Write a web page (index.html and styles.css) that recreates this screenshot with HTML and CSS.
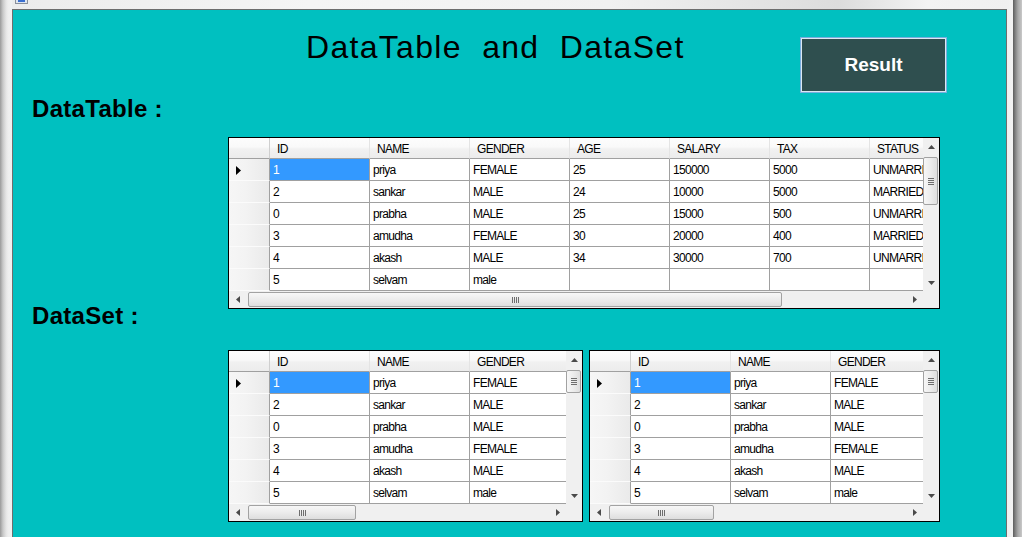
FILE: index.html
```html
<!DOCTYPE html>
<html>
<head>
<meta charset="utf-8">
<title>DataTable and DataSet</title>
<link rel="stylesheet" href="styles.css">
</head>
<body>
<div class="window">
  <div class="frame-left"></div>
  <div class="center">
    <div class="titlebar">
      <svg class="app-icon" width="13" height="4" viewBox="0 0 13 4"><rect x="0.5" y="-1" width="12" height="4.5" fill="#dfe6f0" stroke="#8a8f99"/><rect x="3" y="0" width="7" height="2" fill="#3a6fd0"/></svg>
    </div>
    <main class="client">
      <div class="top">
        <h1 class="title">DataTable  and  DataSet</h1>
        <button class="result">Result</button>
      </div>

      <section class="section">
        <h2 class="label">DataTable :</h2>
        <div class="grids">
          <div class="dgv dgv-main">
            <div class="view">
              <table class="t t7">
                <colgroup><col class="c-rh"><col class="c-d"><col class="c-d"><col class="c-d"><col class="c-d"><col class="c-d"><col class="c-d"><col class="c-d"></colgroup>
                <thead><tr><th class="rh"></th><th>ID</th><th>NAME</th><th>GENDER</th><th>AGE</th><th>SALARY</th><th>TAX</th><th>STATUS</th></tr></thead>
                <tbody>
                  <tr><td class="rh"><svg class="cur" width="5" height="9" viewBox="0 0 5 9"><path d="M0 0L5 4.5L0 9Z"/></svg></td><td class="sel">1</td><td>priya</td><td>FEMALE</td><td>25</td><td>150000</td><td>5000</td><td>UNMARRIED</td></tr>
                  <tr><td class="rh"></td><td>2</td><td>sankar</td><td>MALE</td><td>24</td><td>10000</td><td>5000</td><td>MARRIED</td></tr>
                  <tr><td class="rh"></td><td>0</td><td>prabha</td><td>MALE</td><td>25</td><td>15000</td><td>500</td><td>UNMARRIED</td></tr>
                  <tr><td class="rh"></td><td>3</td><td>amudha</td><td>FEMALE</td><td>30</td><td>20000</td><td>400</td><td>MARRIED</td></tr>
                  <tr><td class="rh"></td><td>4</td><td>akash</td><td>MALE</td><td>34</td><td>30000</td><td>700</td><td>UNMARRIED</td></tr>
                  <tr><td class="rh"></td><td>5</td><td>selvam</td><td>male</td><td></td><td></td><td></td><td></td></tr>
                </tbody>
              </table>
            </div>
            <div class="vscroll">
              <div class="sb-btn"><svg width="7" height="4" viewBox="0 0 7 4"><path d="M0 4H7L3.5 0Z"/></svg></div>
              <div class="vthumb vthumb-main"><span class="grip-v"></span></div>
              <div class="spacer"></div>
              <div class="sb-btn"><svg width="7" height="4" viewBox="0 0 7 4"><path d="M0 0H7L3.5 4Z"/></svg></div>
            </div>
            <div class="hscroll">
              <div class="sb-btn hz"><svg width="4" height="7" viewBox="0 0 4 7"><path d="M4 0V7L0 3.5Z"/></svg></div>
              <div class="hthumb hthumb-main"><span class="grip-h"></span></div>
              <div class="spacer"></div>
              <div class="sb-btn hz"><svg width="4" height="7" viewBox="0 0 4 7"><path d="M0 0V7L4 3.5Z"/></svg></div>
            </div>
            <div class="corner"></div>
          </div>
        </div>
      </section>

      <section class="section section-ds">
        <h2 class="label">DataSet :</h2>
        <div class="grids">
          <div class="dgv dgv-ds1">
            <div class="view">
              <table class="t t3">
                <colgroup><col class="c-rh"><col class="c-d"><col class="c-d"><col class="c-d"></colgroup>
                <thead><tr><th class="rh"></th><th>ID</th><th>NAME</th><th>GENDER</th></tr></thead>
                <tbody>
                  <tr><td class="rh"><svg class="cur" width="5" height="9" viewBox="0 0 5 9"><path d="M0 0L5 4.5L0 9Z"/></svg></td><td class="sel">1</td><td>priya</td><td>FEMALE</td></tr>
                  <tr><td class="rh"></td><td>2</td><td>sankar</td><td>MALE</td></tr>
                  <tr><td class="rh"></td><td>0</td><td>prabha</td><td>MALE</td></tr>
                  <tr><td class="rh"></td><td>3</td><td>amudha</td><td>FEMALE</td></tr>
                  <tr><td class="rh"></td><td>4</td><td>akash</td><td>MALE</td></tr>
                  <tr><td class="rh"></td><td>5</td><td>selvam</td><td>male</td></tr>
                </tbody>
              </table>
            </div>
            <div class="vscroll">
              <div class="sb-btn"><svg width="7" height="4" viewBox="0 0 7 4"><path d="M0 4H7L3.5 0Z"/></svg></div>
              <div class="vthumb vthumb-ds"><span class="grip-v"></span></div>
              <div class="spacer"></div>
              <div class="sb-btn"><svg width="7" height="4" viewBox="0 0 7 4"><path d="M0 0H7L3.5 4Z"/></svg></div>
            </div>
            <div class="hscroll">
              <div class="sb-btn hz"><svg width="4" height="7" viewBox="0 0 4 7"><path d="M4 0V7L0 3.5Z"/></svg></div>
              <div class="hthumb hthumb-ds1"><span class="grip-h"></span></div>
              <div class="spacer"></div>
              <div class="sb-btn hz"><svg width="4" height="7" viewBox="0 0 4 7"><path d="M0 0V7L4 3.5Z"/></svg></div>
            </div>
            <div class="corner"></div>
          </div>

          <div class="dgv dgv-ds2">
            <div class="view">
              <table class="t t3">
                <colgroup><col class="c-rh"><col class="c-d"><col class="c-d"><col class="c-d"></colgroup>
                <thead><tr><th class="rh"></th><th>ID</th><th>NAME</th><th>GENDER</th></tr></thead>
                <tbody>
                  <tr><td class="rh"><svg class="cur" width="5" height="9" viewBox="0 0 5 9"><path d="M0 0L5 4.5L0 9Z"/></svg></td><td class="sel">1</td><td>priya</td><td>FEMALE</td></tr>
                  <tr><td class="rh"></td><td>2</td><td>sankar</td><td>MALE</td></tr>
                  <tr><td class="rh"></td><td>0</td><td>prabha</td><td>MALE</td></tr>
                  <tr><td class="rh"></td><td>3</td><td>amudha</td><td>FEMALE</td></tr>
                  <tr><td class="rh"></td><td>4</td><td>akash</td><td>MALE</td></tr>
                  <tr><td class="rh"></td><td>5</td><td>selvam</td><td>male</td></tr>
                </tbody>
              </table>
            </div>
            <div class="vscroll">
              <div class="sb-btn"><svg width="7" height="4" viewBox="0 0 7 4"><path d="M0 4H7L3.5 0Z"/></svg></div>
              <div class="vthumb vthumb-ds"><span class="grip-v"></span></div>
              <div class="spacer"></div>
              <div class="sb-btn"><svg width="7" height="4" viewBox="0 0 7 4"><path d="M0 0H7L3.5 4Z"/></svg></div>
            </div>
            <div class="hscroll">
              <div class="sb-btn hz"><svg width="4" height="7" viewBox="0 0 4 7"><path d="M4 0V7L0 3.5Z"/></svg></div>
              <div class="hthumb hthumb-ds2"><span class="grip-h"></span></div>
              <div class="spacer"></div>
              <div class="sb-btn hz"><svg width="4" height="7" viewBox="0 0 4 7"><path d="M0 0V7L4 3.5Z"/></svg></div>
            </div>
            <div class="corner"></div>
          </div>
        </div>
      </section>
    </main>
  </div>
  <div class="frame-right"></div>
</div>
</body>
</html>
```

FILE: styles.css
```css
html, body {
  margin: 0;
  padding: 0;
}
body {
  width: 1022px;
  height: 537px;
  overflow: hidden;
  background: #f0f0f0;
  font-family: "Liberation Sans", Arial, sans-serif;
}

.window {
  display: flex;
  width: 1022px;
  height: 537px;
}

.frame-left {
  flex: none;
  width: 12px;
  background: linear-gradient(to right, #9a9a9a 0, #c9c9c9 3px, #e4e4e4 6px, #eeeeee 8px, #f1f1f1 12px);
}

.frame-right {
  flex: none;
  width: 15px;
  background: linear-gradient(to right, #f0f0f0 0, #f3f3f3 6px, #5c5c5c 6px, #7d7d7d 8px, #a8a8a8 11px, #c9c9c9 15px);
}

.center {
  flex: 1;
  min-width: 0;
  display: flex;
  flex-direction: column;
}

.titlebar {
  flex: none;
  height: 9px;
  padding-left: 3px;
  display: flex;
  align-items: flex-start;
  background: linear-gradient(to right, #ececec 0, #f5f5f5 30%, #f1f1f1 60%, #dcdcdc 83%, #f3f3f3 92%, #f0f0f0 100%);
}
.app-icon {
  display: block;
}

.client {
  flex: 1;
  background: #00c0c0;
  border: 1px solid #6d6d6d;
  border-bottom: none;
}

/* header row */
.top {
  height: 85px;
  box-sizing: border-box;
  padding: 18px 59px 0 293px;
  display: flex;
  justify-content: space-between;
  align-items: flex-start;
}
.title {
  margin: 0;
  font: 400 32px/38px "Liberation Sans", Arial, sans-serif;
  letter-spacing: 1.3px;
  white-space: pre;
  color: #000;
}
.result {
  margin-top: 9px;
  width: 147px;
  height: 56px;
  padding: 0;
  background: #2f4f4f;
  color: #fff;
  font: 700 19px "Liberation Sans", Arial, sans-serif;
  border: 1px solid #78aee0;
  box-shadow: inset 0 0 0 1px #dce8f2;
}

/* sections */
.section {
  padding-left: 19px;
}
.label {
  margin: 0;
  font: 700 24px/28px "Liberation Sans", Arial, sans-serif;
  letter-spacing: 0.3px;
  color: #000;
}
.grids {
  margin-left: 196px;
  margin-top: 14px;
  display: flex;
  gap: 6px;
}
.section-ds .label {
  margin-top: -7px;
}
.section-ds .grids {
  margin-top: 20px;
}

/* DataGridView */
.dgv {
  box-sizing: border-box;
  height: 172px;
  border: 1px solid #000;
  background: #fff;
  display: grid;
  grid-template-columns: minmax(0, 1fr) 16px;
  grid-template-rows: 153px 17px;
}
.dgv-main { width: 712px; }
.dgv-ds1 { width: 355px; }
.dgv-ds2 { width: 351px; }

.view {
  grid-column: 1;
  grid-row: 1;
  overflow: hidden;
  background: #fff;
}

.t {
  border-collapse: separate;
  border-spacing: 0;
  table-layout: fixed;
  font: 400 12px "Liberation Sans", Arial, sans-serif;
  letter-spacing: -0.7px;
  color: #000;
}
.t7 { width: 741px; }
.t3 { width: 341px; }
.c-rh { width: 41px; }
.c-d { width: 100px; }

.t th {
  box-sizing: content-box;
  height: 18px;
  line-height: 18px;
  padding: 2px 0 0 7px;
  text-align: left;
  font-weight: 400;
  white-space: nowrap;
  overflow: hidden;
  background: linear-gradient(#fdfdfd 0, #f9f9f9 45%, #f1f1f1 55%, #ececec 100%);
  border-right: 1px solid #e4e4e4;
  border-bottom: 1px solid #a0a0a0;
}
.t th.rh {
  padding: 0;
  height: 20px;
  border-right: 1px solid #cfcfcf;
}

.t td {
  box-sizing: content-box;
  height: 20px;
  line-height: 20px;
  padding: 1px 0 0 3px;
  white-space: nowrap;
  overflow: hidden;
  border-right: 1px solid #a0a0a0;
  border-bottom: 1px solid #a0a0a0;
}
.t td.rh {
  padding: 1px 0 0 7px;
  background: linear-gradient(to right, #f6f6f6 0, #f3f3f3 40%, #eaeaea 100%);
  border-bottom: 1px solid #fbfbfb;
  border-right: 1px solid #a0a0a0;
}
.t td.sel {
  background: #3399ff;
  color: #fff;
}
.cur {
  vertical-align: middle;
  fill: #000;
}

/* scrollbars */
.vscroll {
  grid-column: 2;
  grid-row: 1;
  background: #f0f0f0;
  display: flex;
  flex-direction: column;
}
.hscroll {
  grid-column: 1;
  grid-row: 2;
  background: #f0f0f0;
  display: flex;
}
.corner {
  grid-column: 2;
  grid-row: 2;
  background: #f0f0f0;
}
.sb-btn {
  flex: none;
  height: 17px;
  display: flex;
  align-items: center;
  justify-content: center;
}
.sb-btn svg {
  fill: #4a4a4a;
  display: block;
}
.sb-btn.hz {
  height: auto;
  width: 17px;
}
.spacer {
  flex: 1;
}

.vthumb {
  flex: none;
  box-sizing: border-box;
  width: 15px;
  margin-top: 2px;
  border: 1px solid #a2a2a2;
  border-radius: 2px;
  background: linear-gradient(to right, #f7f7f7 0, #ececec 50%, #dedede 100%);
  display: flex;
  align-items: center;
  justify-content: center;
}
.vthumb-main { height: 48px; }
.vthumb-ds { height: 23px; }

.hthumb {
  flex: none;
  box-sizing: border-box;
  margin: 1px 0 1px 2px;
  border: 1px solid #a2a2a2;
  border-radius: 2px;
  background: linear-gradient(#f7f7f7 0, #ececec 50%, #dedede 100%);
  display: flex;
  align-items: center;
  justify-content: center;
}
.hthumb-main { width: 534px; }
.hthumb-ds1 { width: 108px; }
.hthumb-ds2 { width: 105px; }

.grip-v {
  display: block;
  width: 6px;
  height: 7px;
  background: repeating-linear-gradient(to bottom, #6e6e6e 0, #6e6e6e 1px, transparent 1px, transparent 2px);
}
.grip-h {
  display: block;
  width: 7px;
  height: 6px;
  background: repeating-linear-gradient(to right, #6e6e6e 0, #6e6e6e 1px, transparent 1px, transparent 2px);
}
```
